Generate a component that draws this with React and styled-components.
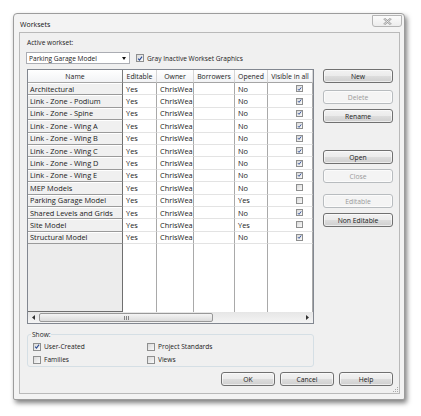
import React from 'react'
import styled, { createGlobalStyle } from 'styled-components'

const GlobalStyle = createGlobalStyle`
    html, body {
        margin: 0;
        padding: 0;
        background: #ffffff;
    }
    body {
        font-family: 'Open Sans', 'Noto Sans', sans-serif;
        font-size: 6.6px;
        color: #1a1a1a;
    }
    * {
        box-sizing: border-box;
    }
`

const cols = '95px 34px 37px 41px 33px 45px'

const rows = [
    ['Architectural', 'No', true],
    ['Link - Zone - Podium', 'No', true],
    ['Link - Zone - Spine', 'No', true],
    ['Link - Zone - Wing A', 'No', true],
    ['Link - Zone - Wing B', 'No', true],
    ['Link - Zone - Wing C', 'No', true],
    ['Link - Zone - Wing D', 'No', true],
    ['Link - Zone - Wing E', 'No', true],
    ['MEP Models', 'No', false],
    ['Parking Garage Model', 'Yes', false],
    ['Shared Levels and Grids', 'No', true],
    ['Site Model', 'Yes', false],
    ['Structural Model', 'No', true],
]

function Check({ checked, size }) {
    return (
        <Box $size={size}>
            {checked && (
                <svg width='7' height='7' viewBox='0 0 7 7'>
                    <path d='M1.3 3.7 L2.9 5.4 L5.9 1.3' fill='none' stroke='#2c4c94' strokeWidth='1.3' />
                </svg>
            )}
        </Box>
    )
}

function App() {
    return (
        <Page>
            <GlobalStyle />
            <Window>
                <TitleBar>
                    <Title>Worksets</Title>
                    <CloseBtn>
                        <svg width='9' height='7' viewBox='0 0 9 7'>
                            <path d='M1 0.5 L8 6.5 M8 0.5 L1 6.5' stroke='#9a9a9a' strokeWidth='2.2' />
                            <path d='M1 0.5 L8 6.5 M8 0.5 L1 6.5' stroke='#f4f4f4' strokeWidth='0.8' />
                        </svg>
                    </CloseBtn>
                </TitleBar>
                <Client>
                    <Label>Active workset:</Label>
                    <TopRow>
                        <Combo>
                            <span>Parking Garage Model</span>
                            <Arrow />
                        </Combo>
                        <CheckItem>
                            <Check checked />
                            <span>Gray Inactive Workset Graphics</span>
                        </CheckItem>
                    </TopRow>
                    <MainRow>
                        <TableFrame>
                            <Row $h='13px'>
                                <HeadCell $name>Name</HeadCell>
                                <HeadCell>Editable</HeadCell>
                                <HeadCell>Owner</HeadCell>
                                <HeadCell>Borrowers</HeadCell>
                                <HeadCell>Opened</HeadCell>
                                <HeadCell>Visible in all</HeadCell>
                            </Row>
                            {rows.map(([name, opened, vis]) => (
                                <Row key={name} $h='12.4px'>
                                    <NameCell>{name}</NameCell>
                                    <DataCell>Yes</DataCell>
                                    <DataCell>ChrisWea</DataCell>
                                    <DataCell />
                                    <DataCell>{opened}</DataCell>
                                    <DataCell $right>
                                        <Check checked={vis} size={7} />
                                    </DataCell>
                                </Row>
                            ))}
                            <Filler>
                                <NameFill />
                                <DataFill />
                                <DataFill />
                                <DataFill />
                                <DataFill />
                                <DataFill />
                            </Filler>
                            <HScroll>
                                <ScrollArrow>
                                    <svg width='3' height='5' viewBox='0 0 3 5'>
                                        <path d='M3 0 L0 2.5 L3 5 Z' fill='#303030' />
                                    </svg>
                                </ScrollArrow>
                                <Thumb>
                                    <svg width='5' height='4' viewBox='0 0 5 4'>
                                        <path d='M0.5 0 V4 M2.5 0 V4 M4.5 0 V4' stroke='#6a6a6a' strokeWidth='0.8' />
                                    </svg>
                                </Thumb>
                                <Track />
                                <ScrollArrow>
                                    <svg width='3' height='5' viewBox='0 0 3 5'>
                                        <path d='M0 0 L3 2.5 L0 5 Z' fill='#303030' />
                                    </svg>
                                </ScrollArrow>
                            </HScroll>
                        </TableFrame>
                        <SideButtons>
                            <Btn>New</Btn>
                            <Btn disabled $mt='7px'>Delete</Btn>
                            <Btn $mt='5px'>Rename</Btn>
                            <Btn $mt='27px'>Open</Btn>
                            <Btn disabled $mt='5px'>Close</Btn>
                            <Btn disabled $mt='11px'>Editable</Btn>
                            <Btn $mt='5px'>Non Editable</Btn>
                        </SideButtons>
                    </MainRow>
                    <ShowGroup>
                        <legend>Show:</legend>
                        <CheckGrid>
                            <CheckItem>
                                <Check checked />
                                <span>User-Created</span>
                            </CheckItem>
                            <CheckItem>
                                <Check />
                                <span>Project Standards</span>
                            </CheckItem>
                            <CheckItem>
                                <Check />
                                <span>Families</span>
                            </CheckItem>
                            <CheckItem>
                                <Check />
                                <span>Views</span>
                            </CheckItem>
                        </CheckGrid>
                    </ShowGroup>
                    <Footer>
                        <Btn $w='54px'>OK</Btn>
                        <Btn $w='54px'>Cancel</Btn>
                        <Btn $w='54px'>Help</Btn>
                    </Footer>
                    <Grip width='6' height='6' viewBox='0 0 6 6'>
                        <path d='M5 1 h1 v1 h-1z M3 3 h1 v1 h-1z M5 3 h1 v1 h-1z M1 5 h1 v1 h-1z M3 5 h1 v1 h-1z M5 5 h1 v1 h-1z' fill='#a8a8a8' />
                    </Grip>
                </Client>
            </Window>
        </Page>
    )
}

export default App

const Page = styled.div`
    width: 421px;
    height: 416px;
    padding: 13px 0 0 13px;
`

const Window = styled.div`
    width: 392px;
    background: #f3f3f3;
    border: 1px solid #9c9c9c;
    border-radius: 4px 4px 2px 2px;
    box-shadow: 2px 3px 5px rgba(0, 0, 0, 0.5);
    padding: 0 4px 5px 5px;
    display: flex;
    flex-direction: column;
`

const TitleBar = styled.div`
    height: 18px;
    display: flex;
    justify-content: space-between;
    align-items: flex-start;
`

const Title = styled.div`
    padding: 6px 0 0 1px;
    font-size: 7px;
    line-height: 10px;
    color: #111;
`

const CloseBtn = styled.div`
    width: 30px;
    height: 12px;
    margin: 1px -2px 0 0;
    border: 1px solid #b4b4b4;
    border-radius: 0 0 3px 3px;
    background: linear-gradient(#fbfbfb, #ececec);
    display: flex;
    align-items: center;
    justify-content: center;
`

const Client = styled.div`
    position: relative;
    background: #f0f0f0;
    border: 1px solid #b9b9b9;
    padding: 5px 6px 7px 7px;
    display: flex;
    flex-direction: column;
`

const Label = styled.div`
    line-height: 10px;
    height: 10px;
`

const TopRow = styled.div`
    margin-top: 4px;
    height: 12px;
    display: flex;
    align-items: center;
    gap: 6px;
`

const Combo = styled.div`
    width: 104px;
    height: 12px;
    margin-left: -1px;
    background: #fff;
    border: 1px solid #abadb3;
    display: flex;
    align-items: center;
    justify-content: space-between;
    padding: 0 3px 0 2px;
    white-space: nowrap;
`

const Arrow = styled.span`
    width: 0;
    height: 0;
    border-left: 2.5px solid transparent;
    border-right: 2.5px solid transparent;
    border-top: 3px solid #111;
`

const CheckItem = styled.div`
    display: flex;
    align-items: center;
    gap: 3px;
    white-space: nowrap;
`

const Box = styled.span`
    width: ${p => p.$size || 8}px;
    height: ${p => p.$size || 8}px;
    border: 1px solid #8e8f8f;
    background: linear-gradient(135deg, #d9d9d9, #fafafa);
    display: inline-flex;
    align-items: center;
    justify-content: center;
    flex: none;

    svg {
        width: ${p => (p.$size || 8) - 1}px;
        height: ${p => (p.$size || 8) - 1}px;
    }
`

const MainRow = styled.div`
    margin-top: 5px;
    display: flex;
    gap: 9px;
    align-items: flex-start;
`

const TableFrame = styled.div`
    width: 287px;
    height: 255px;
    border: 1px solid #828790;
    background: #fff;
    display: flex;
    flex-direction: column;
    font-size: 7.4px;
`

const Row = styled.div`
    display: grid;
    grid-template-columns: ${cols};
    height: ${p => p.$h};
    flex: none;
`

const HeadCell = styled.div`
    background: linear-gradient(#ffffff, #f2f3f5);
    border-right: 1px solid ${p => (p.$name ? '#7a7a7a' : '#d5d5d5')};
    border-bottom: 1px solid #a5a5a5;
    display: flex;
    align-items: center;
    justify-content: center;
    white-space: nowrap;
    overflow: hidden;
    font-size: 6.9px;
`

const NameCell = styled.div`
    background: #f0f0f0;
    border-right: 1px solid #6f6f6f;
    border-bottom: 1px solid #9a9a9a;
    box-shadow: inset 0 1px 0 #ffffff;
    padding-left: 2px;
    display: flex;
    align-items: center;
    white-space: nowrap;
    overflow: hidden;
`

const DataCell = styled.div`
    border-right: 1px solid #a9a9a9;
    border-bottom: 1px solid #e3e3e3;
    padding: ${p => (p.$right ? '0 9px 0 0' : '0 0 0 3px')};
    display: flex;
    align-items: center;
    justify-content: ${p => (p.$right ? 'flex-end' : 'flex-start')};
    white-space: nowrap;
    overflow: hidden;
`

const Filler = styled.div`
    flex: 1;
    display: grid;
    grid-template-columns: ${cols};
`

const NameFill = styled.div`
    background: #ececec;
    border-right: 1px solid #6f6f6f;
    border-bottom: 1px solid #6f6f6f;
`

const DataFill = styled.div`
    border-right: 1px solid #a9a9a9;
`

const HScroll = styled.div`
    height: 11px;
    flex: none;
    display: flex;
    align-items: center;
    background: linear-gradient(#e6e6e6, #f4f4f4);
`

const ScrollArrow = styled.div`
    width: 11px;
    height: 11px;
    display: flex;
    align-items: center;
    justify-content: center;
`

const Thumb = styled.div`
    width: 174px;
    height: 9px;
    border: 1px solid #989898;
    border-radius: 2px;
    background: linear-gradient(#f4f4f4, #dcdcdc);
    display: flex;
    align-items: center;
    justify-content: center;
`

const Track = styled.div`
    flex: 1;
`

const SideButtons = styled.div`
    width: 70px;
    display: flex;
    flex-direction: column;
`

const Btn = styled.button`
    width: ${p => p.$w || '100%'};
    height: 14px;
    margin-top: ${p => p.$mt || '0'};
    padding: 0;
    font-family: inherit;
    font-size: 6.8px;
    color: ${p => (p.disabled ? '#9a9a9a' : '#1a1a1a')};
    border: 1px solid ${p => (p.disabled ? '#b8bcbf' : '#707070')};
    border-radius: 3px;
    background: ${p =>
        p.disabled
            ? '#f4f4f4'
            : 'linear-gradient(#f2f2f2 0%, #ebebeb 50%, #dddddd 51%, #cfcfcf 100%)'};
    box-shadow: inset 0 0 0 1px rgba(255, 255, 255, 0.6);
`

const ShowGroup = styled.fieldset`
    margin: 6px 0 0 0;
    width: 287px;
    border: 1px solid #d5dfe5;
    border-radius: 3px;
    padding: 1px 5px 0 5px;

    legend {
        padding: 0 1px;
        margin-left: -2px;
        line-height: 9px;
    }
`

const CheckGrid = styled.div`
    display: grid;
    grid-template-columns: 114px auto;
    grid-auto-rows: 13px;
`

const Footer = styled.div`
    margin-top: 5px;
    display: flex;
    justify-content: flex-end;
    gap: 5px;
`

const Grip = styled.svg`
    position: absolute;
    right: 1px;
    bottom: 1px;
`
